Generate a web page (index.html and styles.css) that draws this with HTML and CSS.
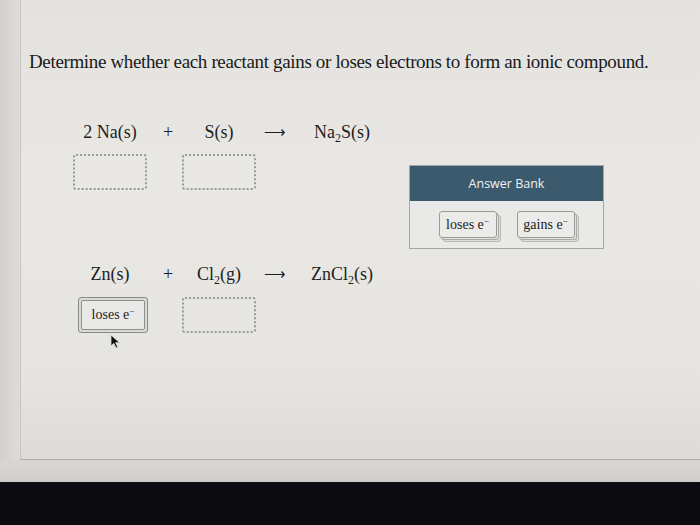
FILE: index.html
```html
<!DOCTYPE html>
<html>
<head>
<meta charset="utf-8">
<link rel="stylesheet" href="styles.css">
</head>
<body>
<div class="screen">
  <div class="card">
    <p class="prompt">Determine whether each reactant gains or loses electrons to form an ionic compound.</p>
    <div class="section">
      <div class="eq">
        <div class="term">2 Na(s)</div>
        <div class="op">+</div>
        <div class="term">S(s)</div>
        <div class="op arrow">&#x27F6;</div>
        <div class="term product">Na<sub>2</sub>S(s)</div>
        <div class="slot"><div class="drop"></div></div>
        <div></div>
        <div class="slot"><div class="drop"></div></div>
      </div>
      <div class="bank">
        <div class="bank-head">Answer Bank</div>
        <div class="bank-body">
          <div class="chip">loses e<sup>&minus;</sup></div>
          <div class="chip">gains e<sup>&minus;</sup></div>
        </div>
      </div>
    </div>
    <div class="eq eq2">
      <div class="term">Zn(s)</div>
      <div class="op">+</div>
      <div class="term">Cl<sub>2</sub>(g)</div>
      <div class="op arrow">&#x27F6;</div>
      <div class="term product">ZnCl<sub>2</sub>(s)</div>
      <div class="slot">
        <div class="placed"><span>loses e<sup>&minus;</sup></span></div>
        <svg class="cursor" width="12" height="15" viewBox="0 0 12 15"><path d="M1 1 L1 12 L3.8 9.4 L6 14 L7.8 13.2 L5.6 8.7 L9.6 8.7 Z" fill="#111" stroke="#ddd" stroke-width="0.8"/></svg>
      </div>
      <div></div>
      <div class="slot"><div class="drop"></div></div>
    </div>
  </div>
  <div class="strip"></div>
</div>
<div class="bezel"></div>
</body>
</html>
```
FILE: styles.css
```css
html, body {
  margin: 0;
  padding: 0;
}
body {
  width: 700px;
  height: 525px;
  overflow: hidden;
  background: #0c0b10;
  font-family: "Liberation Serif", "Times New Roman", serif;
  color: #1e1e1e;
}
.screen {
  height: 482px;
  background: linear-gradient(90deg, #d3d1ce 0px, #dedcd9 20px, #e4e3e0 300px, #e2e1de 700px);
  display: flex;
  flex-direction: column;
}
.card {
  margin-left: 20px;
  height: 460px;
  box-sizing: border-box;
  border-left: 1px solid #c9c7c4;
  border-bottom: 1px solid #aeacaa;
  background: linear-gradient(180deg, #e3e2df 0px, #e9e8e5 200px, #e5e4e1 380px, #dcdbd8 460px);
  position: relative;
}
.strip {
  flex: 1;
  background: linear-gradient(180deg, #d9d7d4, #cfcdca);
}
.bezel {
  height: 43px;
  background: #0c0b10;
}
.prompt {
  margin: 0;
  padding: 52px 0 0 8px;
  font-size: 19px;
  letter-spacing: -0.35px;
  line-height: 20px;
  color: #1a1a1a;
}
.section {
  display: flex;
  align-items: flex-start;
  margin-top: 48px;
  margin-left: 44px;
}
.eq {
  display: grid;
  grid-template-columns: 90px 26px 76px 36px 98px;
  grid-template-rows: 24px 46px;
  align-items: center;
  justify-items: center;
  font-size: 18px;
}
.eq2 {
  margin-left: 44px;
  margin-top: 13px;
  grid-template-rows: 24px 47px;
}
.term, .op {
  line-height: 24px;
  white-space: nowrap;
}
.arrow {
  font-size: 15px;
}
sub {
  font-size: 12px;
  line-height: 0;
  vertical-align: -4px;
}
sup {
  font-size: 9px;
  line-height: 0;
  vertical-align: 5px;
}
.slot {
  position: relative;
  width: 74px;
  height: 36px;
  align-self: end;
}
.drop {
  width: 74px;
  height: 36px;
  box-sizing: border-box;
  border: 2px dotted #9a9a9a;
  border-radius: 3px;
}
.bank {
  margin-left: 18px;
  margin-top: 45px;
  width: 193px;
  border: 1px solid #a4a4a2;
  background: #e9e9e7;
}
.bank-head {
  height: 35px;
  background: #3c5a6e;
  color: #f2f2f2;
  font-family: "Open Sans", "Liberation Sans", sans-serif;
  font-size: 12.5px;
  line-height: 35px;
  text-align: center;
}
.bank-body {
  display: flex;
  justify-content: center;
  gap: 20px;
  padding: 10px 0 10px;
}
.chip {
  width: 58px;
  height: 27px;
  box-sizing: border-box;
  border: 1px solid #9b9b99;
  border-radius: 3px;
  background: #ebebea;
  box-shadow: 2px 2px 0 -1px #e0e0de, 2px 2px 0 0 #a9a9a7, 4px 4px 0 -1px #dededc, 4px 4px 0 0 #b9b9b7;
  font-size: 14px;
  line-height: 25px;
  text-align: center;
  color: #222;
}
.placed {
  position: relative;
  left: 5px;
  width: 70px;
  height: 36px;
  box-sizing: border-box;
  border: 1px solid #8a8a88;
  border-radius: 3px;
  padding: 2px;
  background: #d9d9d7;
}
.placed span {
  display: block;
  height: 100%;
  box-sizing: border-box;
  border: 1px solid #8e8e8c;
  border-radius: 2px;
  background: #e9e9e7;
  font-size: 14px;
  line-height: 28px;
  text-align: center;
}
.cursor {
  position: absolute;
  left: 37px;
  top: 37px;
}
```
